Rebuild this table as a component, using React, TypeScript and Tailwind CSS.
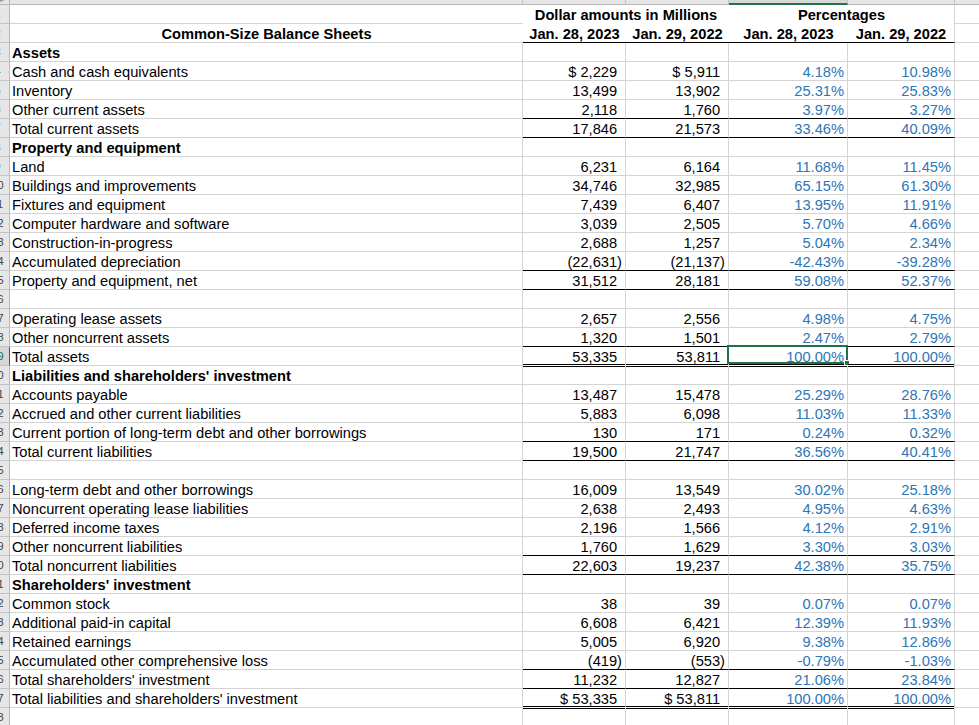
import type { ReactNode } from "react";

type Border = "none" | "single" | "double";

type Line = {
    label?: string;
    bold?: boolean;
    vals?: [string, string, string, string];
    border?: Border;
};

// rows 3..38 of the sheet
const lines: Line[] = [
    { label: "Assets", bold: true },
    { label: "Cash and cash equivalents", vals: ["$ 2,229", "$ 5,911", "4.18%", "10.98%"] },
    { label: "Inventory", vals: ["13,499", "13,902", "25.31%", "25.83%"] },
    { label: "Other current assets", vals: ["2,118", "1,760", "3.97%", "3.27%"], border: "single" },
    { label: "Total current assets", vals: ["17,846", "21,573", "33.46%", "40.09%"], border: "single" },
    { label: "Property and equipment", bold: true },
    { label: "Land", vals: ["6,231", "6,164", "11.68%", "11.45%"] },
    { label: "Buildings and improvements", vals: ["34,746", "32,985", "65.15%", "61.30%"] },
    { label: "Fixtures and equipment", vals: ["7,439", "6,407", "13.95%", "11.91%"] },
    { label: "Computer hardware and software", vals: ["3,039", "2,505", "5.70%", "4.66%"] },
    { label: "Construction-in-progress", vals: ["2,688", "1,257", "5.04%", "2.34%"] },
    { label: "Accumulated depreciation", vals: ["(22,631)", "(21,137)", "-42.43%", "-39.28%"], border: "single" },
    { label: "Property and equipment, net", vals: ["31,512", "28,181", "59.08%", "52.37%"], border: "single" },
    {},
    { label: "Operating lease assets", vals: ["2,657", "2,556", "4.98%", "4.75%"] },
    { label: "Other noncurrent assets", vals: ["1,320", "1,501", "2.47%", "2.79%"], border: "single" },
    { label: "Total assets", vals: ["53,335", "53,811", "100.00%", "100.00%"], border: "double" },
    { label: "Liabilities and shareholders' investment", bold: true },
    { label: "Accounts payable", vals: ["13,487", "15,478", "25.29%", "28.76%"] },
    { label: "Accrued and other current liabilities", vals: ["5,883", "6,098", "11.03%", "11.33%"] },
    { label: "Current portion of long-term debt and other borrowings", vals: ["130", "171", "0.24%", "0.32%"], border: "single" },
    { label: "Total current liabilities", vals: ["19,500", "21,747", "36.56%", "40.41%"], border: "single" },
    {},
    { label: "Long-term debt and other borrowings", vals: ["16,009", "13,549", "30.02%", "25.18%"] },
    { label: "Noncurrent operating lease liabilities", vals: ["2,638", "2,493", "4.95%", "4.63%"] },
    { label: "Deferred income taxes", vals: ["2,196", "1,566", "4.12%", "2.91%"] },
    { label: "Other noncurrent liabilities", vals: ["1,760", "1,629", "3.30%", "3.03%"], border: "single" },
    { label: "Total noncurrent liabilities", vals: ["22,603", "19,237", "42.38%", "35.75%"], border: "single" },
    { label: "Shareholders' investment", bold: true },
    { label: "Common stock", vals: ["38", "39", "0.07%", "0.07%"] },
    { label: "Additional paid-in capital", vals: ["6,608", "6,421", "12.39%", "11.93%"] },
    { label: "Retained earnings", vals: ["5,005", "6,920", "9.38%", "12.86%"] },
    { label: "Accumulated other comprehensive loss", vals: ["(419)", "(553)", "-0.79%", "-1.03%"], border: "single" },
    { label: "Total shareholders' investment", vals: ["11,232", "12,827", "21.06%", "23.84%"], border: "single" },
    { label: "Total liabilities and shareholders' investment", vals: ["$ 53,335", "$ 53,811", "100.00%", "100.00%"], border: "double" },
    {},
];

const widths = ["w-[103px]", "w-[103px]", "w-[119px]", "w-[107px]"];

function bottom(border: Border = "none") {
    if (border === "single") return "h-[19px] border-b border-b-black";
    // double rule sits one pixel lower, straddling the gridline like Excel draws it
    if (border === "double") return "h-[20px] mb-[-1px] border-b-[3px] border-b-black border-double";
    return "h-[19px] border-b border-b-[#d4d4d4]";
}

function RowHead({ n, active }: { n: number; active?: boolean }) {
    return (
        <div
            className={`w-[10px] h-[19px] shrink-0 overflow-hidden border-r border-b border-b-[#c4c4c4] ${
                active ? "bg-[#d6d6d6] border-r-[#217346]" : "bg-[#e6e6e6] border-r-[#b8b8b8]"
            }`}
        >
            <div
                className={`ml-[-18px] w-[31px] text-center text-[11px] leading-[18px] ${
                    active ? "text-[#217346]" : "text-[#444]"
                }`}
            >
                {n}
            </div>
        </div>
    );
}

function Cell({ w, border, className, children }: { w: string; border?: Border; className?: string; children?: ReactNode }) {
    return (
        <div
            className={`${w} shrink-0 border-r border-r-[#d4d4d4] ${bottom(border)} pt-[2px] leading-[17px] whitespace-nowrap ${className ?? ""}`}
        >
            {children}
        </div>
    );
}

function Row({ n, line }: { n: number; line: Line }) {
    const v = line.vals;
    return (
        <div className="flex h-[19px]">
            <RowHead n={n} active={n === 19} />
            <Cell w="w-[513px]" className={`pl-[2px] ${line.bold ? "font-bold" : ""}`}>
                {line.label}
            </Cell>
            {widths.map((w, i) => {
                const val = v ? v[i] : "";
                const pct = i >= 2;
                const paren = val.startsWith("(");
                return (
                    <Cell
                        key={i}
                        w={w}
                        border={line.border}
                        className={`relative text-right pr-[3px] ${pct ? "text-[#2e75b6]" : ""}`}
                    >
                        {val}
                        {val && !pct && !paren && <span className="invisible">)</span>}
                        {n === 19 && i === 2 && (
                            <div className="absolute -left-[2px] -top-[2px] -right-[1px] bottom-0 border-2 border-[#217346]">
                                <div className="absolute -right-[4px] -bottom-[4px] w-[6px] h-[6px] bg-[#217346] border border-white" />
                            </div>
                        )}
                    </Cell>
                );
            })}
            <div className="flex-1 h-[19px] border-b border-b-[#d4d4d4]" />
        </div>
    );
}

export default function App() {
    return (
        <div className="w-[979px] h-[725px] overflow-hidden bg-white text-black text-[14.67px] font-['Liberation_Sans',Arial,sans-serif]">
            {/* column header strip, mostly scrolled out of view */}
            <div className="flex h-[5px]">
                <div className="w-[10px] shrink-0 bg-[#e6e6e6] border-r border-b border-r-[#b8b8b8] border-b-[#b8b8b8]">
                    <svg width="9" height="4" viewBox="0 0 9 4" className="block">
                        <polygon points="0,0 5,0 0,2" fill="#9a9a9a" />
                    </svg>
                </div>
                <div className="w-[513px] shrink-0 bg-[#e6e6e6] border-r border-b border-r-[#c4c4c4] border-b-[#b8b8b8]" />
                <div className="w-[103px] shrink-0 bg-[#e6e6e6] border-r border-b border-r-[#c4c4c4] border-b-[#b8b8b8]" />
                <div className="w-[103px] shrink-0 bg-[#e6e6e6] border-r border-b border-r-[#c4c4c4] border-b-[#b8b8b8]" />
                <div className="w-[119px] shrink-0 bg-[#d6d6d6] border-r border-b-2 border-r-[#c4c4c4] border-b-[#217346]" />
                <div className="w-[107px] shrink-0 bg-[#e6e6e6] border-r border-b border-r-[#c4c4c4] border-b-[#b8b8b8]" />
                <div className="flex-1 bg-[#e6e6e6] border-b border-b-[#b8b8b8]" />
            </div>

            {/* row 1 */}
            <div className="flex">
                <RowHead n={1} />
                <div className="w-[513px] h-[19px] shrink-0 border-b border-b-[#d4d4d4]" />
                <div className="w-[206px] h-[19px] shrink-0 pt-[2px] leading-[17px] text-center font-bold whitespace-nowrap">
                    Dollar amounts in Millions
                </div>
                <div className="w-[226px] h-[19px] shrink-0 border-r border-r-[#d4d4d4] pt-[2px] leading-[17px] text-center font-bold">
                    Percentages
                </div>
                <div className="flex-1 h-[19px] border-b border-b-[#d4d4d4]" />
            </div>

            {/* row 2 */}
            <div className="flex">
                <RowHead n={2} />
                <div className="w-[513px] h-[19px] shrink-0 border-b border-b-[#d4d4d4] pt-[2px] leading-[17px] text-center font-bold">
                    Common-Size Balance Sheets
                </div>
                <div className="w-[103px] h-[19px] shrink-0 border-b border-b-black pt-[2px] leading-[17px] text-center font-bold whitespace-nowrap">
                    Jan. 28, 2023
                </div>
                <div className="w-[103px] h-[19px] shrink-0 border-b border-b-black pt-[2px] leading-[17px] text-center font-bold whitespace-nowrap">
                    Jan. 29, 2022
                </div>
                <div className="w-[119px] h-[19px] shrink-0 border-b border-b-black pt-[2px] leading-[17px] text-center font-bold whitespace-nowrap">
                    Jan. 28, 2023
                </div>
                <div className="w-[107px] h-[19px] shrink-0 border-b border-b-black border-r border-r-[#d4d4d4] pt-[2px] leading-[17px] text-center font-bold whitespace-nowrap">
                    Jan. 29, 2022
                </div>
                <div className="flex-1 h-[19px] border-b border-b-[#d4d4d4]" />
            </div>

            {lines.map((line, i) => (
                <Row key={i} n={i + 3} line={line} />
            ))}
        </div>
    );
}
